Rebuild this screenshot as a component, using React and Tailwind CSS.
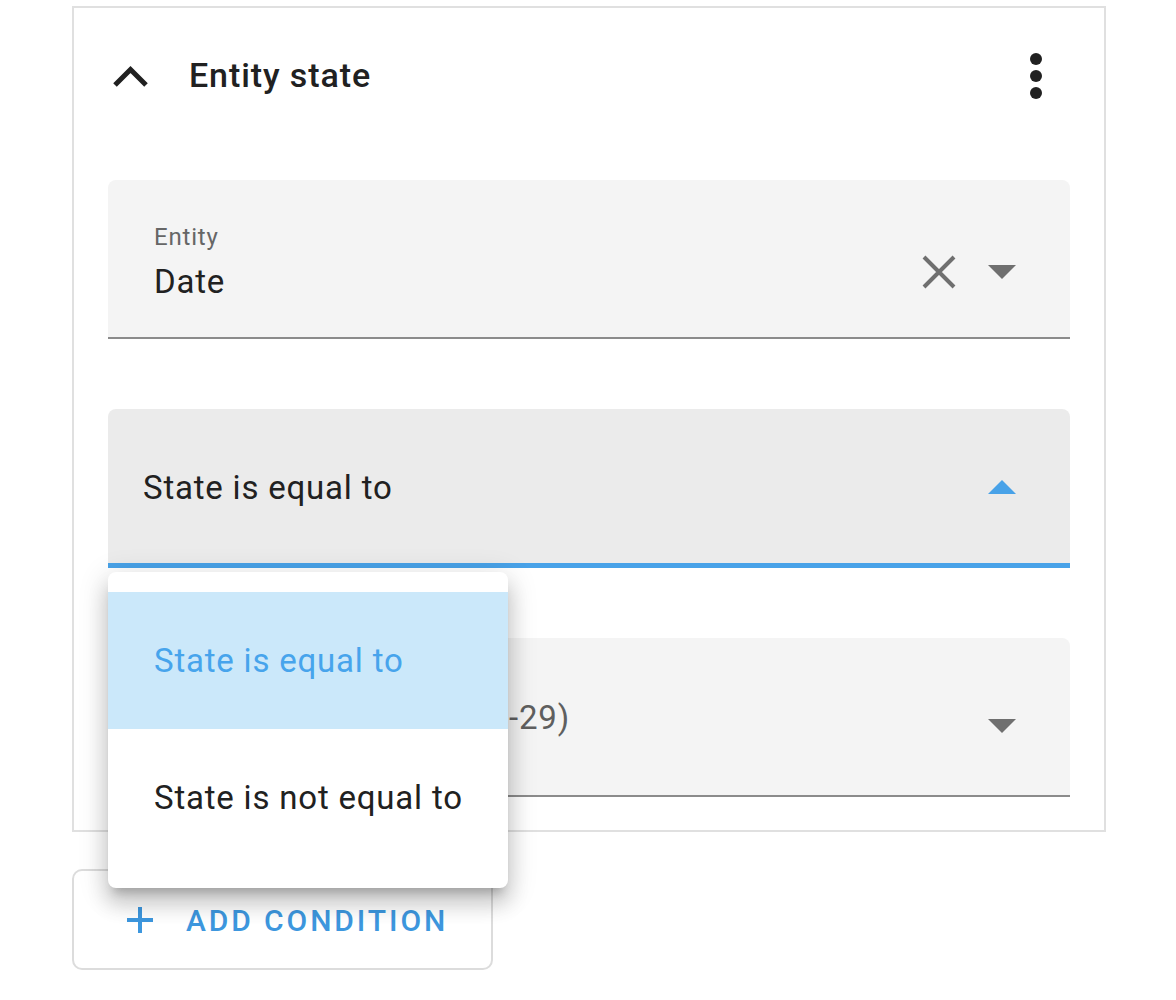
import React from "react";

const Triangle = ({ up, color }) => (
  <svg width="28" height="14" viewBox="0 0 28 14" className="block">
    {up ? <path d="M0 14 L14 0 L28 14 Z" fill={color} /> : <path d="M0 0 L14 14 L28 0 Z" fill={color} />}
  </svg>
);

export default function App() {
  return (
    <div className="min-h-screen bg-white font-['Roboto',sans-serif] pt-[6px] pl-[72px] text-[#212121]">
      <div className="relative w-[1034px] border-2 border-[#e0e0e0] px-[34px] pb-[33px]">
        {/* header */}
        <div className="h-[135px] flex items-center">
          <svg width="40" height="24" viewBox="0 0 40 24" className="ml-[3px]">
            <polyline points="4,21 19.5,5.5 35,21" fill="none" stroke="#212121" strokeWidth="5" />
          </svg>
          <div className="ml-[38px] text-[34px] font-medium tracking-[0.9px]">Entity state</div>
          <svg width="14" height="48" viewBox="0 0 14 48" className="ml-auto mr-[27px]">
            <circle cx="7" cy="7" r="6" fill="#212121" />
            <circle cx="7" cy="24" r="6" fill="#212121" />
            <circle cx="7" cy="41" r="6" fill="#212121" />
          </svg>
        </div>

        <div className="mt-[37px] flex flex-col gap-[70px]">
          {/* entity field */}
          <div className="h-[159px] bg-[#f4f4f4] rounded-t-[8px] border-b-2 border-[#8b8b8b] flex items-center pl-[46px] pr-[54px]">
            <div className="flex flex-col pt-[8px]">
              <span className="text-[24px] leading-[32px] text-[#666666] tracking-[0.8px]">Entity</span>
              <span className="text-[33px] leading-[46px] mt-[6px] tracking-[0.8px]">Date</span>
            </div>
            <div className="ml-auto flex items-center gap-[32px] pt-[26px]">
              <svg width="34" height="34" viewBox="0 0 34 34">
                <path d="M2 2 L32 32 M32 2 L2 32" stroke="#6f6f6f" strokeWidth="4" />
              </svg>
              <Triangle color="#6f6f6f" />
            </div>
          </div>

          {/* operator select, focused */}
          <div className="h-[159px] bg-[#ebebeb] rounded-t-[8px] border-b-[5px] border-[#48a2e8] flex items-center pl-[35px] pr-[54px]">
            <span className="text-[33px] tracking-[0.8px] pt-[4px]">State is equal to</span>
            <div className="ml-auto pt-[2px]">
              <Triangle up color="#48a2e8" />
            </div>
          </div>

          {/* state value */}
          <div className="h-[159px] bg-[#f4f4f4] rounded-t-[8px] border-b-2 border-[#8b8b8b] flex items-center pl-[35px] pr-[54px]">
            <span className="w-[427px] text-right text-[33px] text-[#5f5f5f] tracking-[0.8px] whitespace-nowrap overflow-hidden pt-[2px]">
              2024-07-29 (2024-07-29)
            </span>
            <div className="ml-auto pt-[18px]">
              <Triangle color="#6f6f6f" />
            </div>
          </div>
        </div>

        {/* open menu */}
        <div className="absolute left-[34px] top-[564px] w-[400px] bg-white rounded-[8px] pt-[20px] pb-[22px] z-10 shadow-[0_10px_10px_-6px_rgba(0,0,0,0.2),0_16px_20px_2px_rgba(0,0,0,0.14),0_6px_28px_4px_rgba(0,0,0,0.12)]">
          <div className="h-[137px] bg-[#cbe8fa] flex items-center pl-[46px] text-[33px] text-[#47a4ec] tracking-[0.8px]">
            State is equal to
          </div>
          <div className="h-[137px] flex items-center pl-[46px] text-[33px] tracking-[0.8px]">
            State is not equal to
          </div>
        </div>
      </div>

      <button className="mt-[37px] w-[421px] h-[101px] border-2 border-[#dcdcdc] rounded-[10px] flex items-center pl-[52px] text-[#3d97de]">
        <svg width="28" height="28" viewBox="0 0 28 28">
          <path d="M14 1 V27 M1 14 H27" stroke="#3d97de" strokeWidth="4" />
        </svg>
        <span className="ml-[32px] text-[30px] font-medium tracking-[2.9px] pt-[2px]">ADD CONDITION</span>
      </button>
    </div>
  );
}
